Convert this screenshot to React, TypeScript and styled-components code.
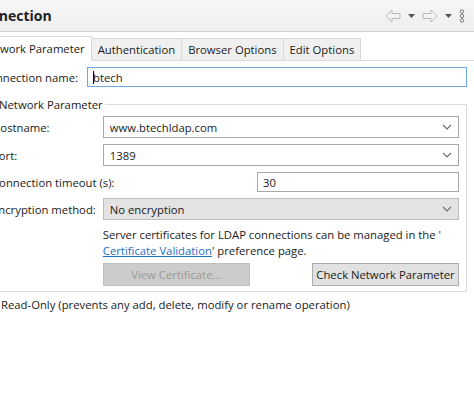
import React from 'react';
import styled, { createGlobalStyle } from 'styled-components';

const FONT = '"Open Sans", "Noto Sans", sans-serif';

const GlobalStyle = createGlobalStyle`
  html, body {
    margin: 0;
    padding: 0;
    background: #ffffff;
    overflow: hidden;
  }
  body {
    font-family: ${FONT};
    font-size: 11.3px;
    color: #1a1a1a;
  }
`;

// the screenshot is cut on the left, so the whole view starts a bit left of the window
const Page = styled.div`
  width: 504px;
  height: 408px;
  margin-left: -30px;
  display: flex;
  flex-direction: column;
  background: #ffffff;
`;

const Header = styled.div`
  height: 31px;
  display: flex;
  align-items: center;
  justify-content: space-between;
  padding: 0 9px 0 2px;
  background: linear-gradient(#f6f6f6, #efefef);
  border-bottom: 1px solid #cfcfcf;
`;

const Title = styled.div`
  font-size: 14px;
  font-weight: 700;
  color: #222;
`;

const ToolBar = styled.div`
  display: flex;
  align-items: center;
  gap: 7px;
`;

const TabStrip = styled.div`
  display: flex;
  align-items: flex-end;
  height: 28px;
  padding-left: 4px;
  border-bottom: 1px solid #d9d9d9;
  background: #ffffff;
`;

const Tab = styled.div<{ $active?: boolean }>`
  height: ${p => (p.$active ? '23px' : '21px')};
  display: flex;
  align-items: center;
  padding: 0 6px;
  margin-bottom: -1px;
  border: 1px solid #d9d9d9;
  border-left: ${p => (p.$active ? '1px solid #d9d9d9' : 'none')};
  border-bottom: ${p => (p.$active ? '1px solid #ffffff' : '1px solid #d9d9d9')};
  background: ${p => (p.$active ? '#ffffff' : '#f0f0f0')};
  white-space: nowrap;
`;

const Body = styled.div`
  padding: 6px 7px 0 12px;
  display: flex;
  flex-direction: column;
`;

const NameRow = styled.div`
  display: flex;
  align-items: center;
  gap: 9px;
`;

const Label = styled.span`
  white-space: nowrap;
`;

const TextField = styled.div<{ $focused?: boolean; $width?: string }>`
  flex: ${p => (p.$width ? 'none' : '1')};
  width: ${p => p.$width ?? 'auto'};
  height: 20px;
  box-sizing: border-box;
  display: flex;
  align-items: center;
  padding: 0 5px;
  border: 1px solid ${p => (p.$focused ? '#6aa8e6' : '#a8a8a8')};
  background: #ffffff;
`;

const Caret = styled.span`
  display: inline-block;
  width: 1px;
  height: 13px;
  background: #000;
  margin-right: -1px;
`;

const Group = styled.fieldset`
  margin: 10px 0 0 5px;
  padding: 4px 7px 5px 4px;
  border: 1px solid #dcdcdc;
  min-width: 0;
`;

const Legend = styled.legend`
  padding: 0 2px 0 1px;
  margin-left: 6px;
`;

const FormGrid = styled.div`
  display: grid;
  grid-template-columns: auto 1fr;
  column-gap: 7px;
  row-gap: 6px;
  align-items: center;
`;

const WideRow = styled.div`
  grid-column: 1 / -1;
  display: flex;
  align-items: center;
  justify-content: space-between;
`;

const Combo = styled.div<{ $readOnly?: boolean }>`
  height: 22px;
  box-sizing: border-box;
  display: flex;
  align-items: center;
  justify-content: space-between;
  padding: 0 6px;
  border: 1px solid ${p => (p.$readOnly ? '#bdbdbd' : '#a8a8a8')};
  background: ${p => (p.$readOnly ? '#e3e3e3' : '#ffffff')};
`;

const Info = styled.div`
  grid-column: 2;
  line-height: 16px;
  margin-top: 1px;
  white-space: nowrap;
`;

const Link = styled.a`
  color: #1e6fc9;
  text-decoration: underline;
`;

const ButtonRow = styled.div`
  grid-column: 2;
  display: flex;
  justify-content: space-between;
  margin-top: -2px;
`;

const Button = styled.div<{ $disabled?: boolean }>`
  height: 23px;
  box-sizing: border-box;
  display: flex;
  align-items: center;
  justify-content: center;
  padding: 0 6px;
  width: 147px;
  border: 1px solid ${p => (p.$disabled ? '#bfbfbf' : '#adadad')};
  background: ${p => (p.$disabled ? '#cccccc' : '#e1e1e1')};
  color: ${p => (p.$disabled ? '#9a9a9a' : '#1a1a1a')};
  white-space: nowrap;
`;

const CheckRow = styled.div`
  display: flex;
  align-items: center;
  gap: 4px;
  margin-top: 5px;
  margin-left: 2px;
`;

const CheckBox = styled.span`
  width: 13px;
  height: 13px;
  box-sizing: border-box;
  border: 1px solid #333;
  background: #fff;
`;

function Chevron() {
  return (
    <svg width="10" height="6" viewBox="0 0 10 6">
      <path d="M1 1 L5 5 L9 1" fill="none" stroke="#6b6b6b" strokeWidth="1.1" />
    </svg>
  );
}

function NavArrow({ dir }: { dir: 'left' | 'right' }) {
  const d = 'M1 7 L7 1 L7 4.5 L15 4.5 L15 9.5 L7 9.5 L7 13 Z';
  return (
    <svg width="16" height="14" viewBox="0 0 16 14">
      <path
        d={d}
        fill="none"
        stroke="#b9b9b9"
        strokeWidth="1"
        transform={dir === 'right' ? 'translate(16 0) scale(-1 1)' : undefined}
      />
    </svg>
  );
}

function DropTri() {
  return (
    <svg width="7" height="4" viewBox="0 0 7 4">
      <path d="M0 0 L7 0 L3.5 4 Z" fill="#555" />
    </svg>
  );
}

function ViewMenu() {
  return (
    <svg width="6" height="14" viewBox="0 0 6 14">
      <circle cx="3" cy="2.5" r="1.7" fill="none" stroke="#777" strokeWidth="1" />
      <circle cx="3" cy="7" r="1.7" fill="none" stroke="#777" strokeWidth="1" />
      <circle cx="3" cy="11.5" r="1.7" fill="none" stroke="#777" strokeWidth="1" />
    </svg>
  );
}

export default function App() {
  return (
    <>
      <GlobalStyle />
      <Page>
        <Header>
          <Title>Connection</Title>
          <ToolBar>
            <NavArrow dir="left" />
            <DropTri />
            <NavArrow dir="right" />
            <DropTri />
            <ViewMenu />
          </ToolBar>
        </Header>

        <TabStrip>
          <Tab $active>Network Parameter</Tab>
          <Tab>Authentication</Tab>
          <Tab>Browser Options</Tab>
          <Tab>Edit Options</Tab>
        </TabStrip>

        <Body>
          <NameRow>
            <Label>Connection name:</Label>
            <TextField $focused>
              <Caret />btech
            </TextField>
          </NameRow>

          <Group>
            <Legend>Network Parameter</Legend>
            <FormGrid>
              <Label>Hostname:</Label>
              <Combo>www.btechldap.com<Chevron /></Combo>

              <Label>Port:</Label>
              <Combo>1389<Chevron /></Combo>

              <WideRow>
                <Label>Connection timeout (s):</Label>
                <TextField $width="202px">30</TextField>
              </WideRow>

              <Label>Encryption method:</Label>
              <Combo $readOnly>No encryption<Chevron /></Combo>

              <Info>
                Server certificates for LDAP connections can be managed in the '
                <br />
                <Link>Certificate Validation</Link>' preference page.
              </Info>

              <ButtonRow>
                <Button $disabled>View Certificate...</Button>
                <Button>Check Network Parameter</Button>
              </ButtonRow>
            </FormGrid>
          </Group>

          <CheckRow>
            <CheckBox />
            <Label>Read-Only (prevents any add, delete, modify or rename operation)</Label>
          </CheckRow>
        </Body>
      </Page>
    </>
  );
}
